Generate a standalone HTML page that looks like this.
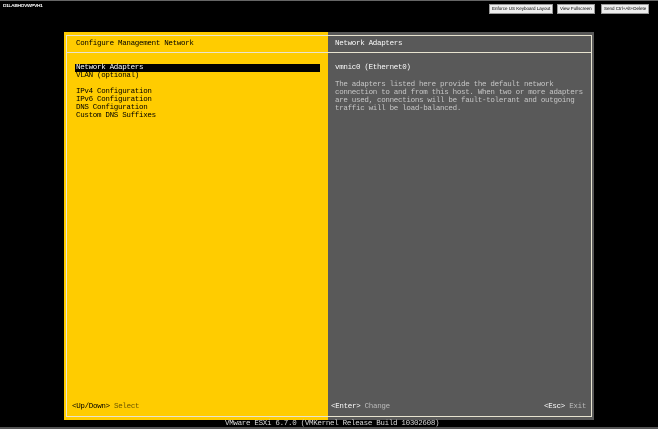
<!DOCTYPE html>
<html><head><style>
body{margin:0;width:658px;height:429px;background:#000;position:relative;overflow:hidden;font-family:"Liberation Mono",monospace;}
.t{position:absolute;font-size:7.5px;line-height:8px;white-space:pre;letter-spacing:-0.3px}
.btn{position:absolute;top:4px;height:8px;background:#eee;border:1px solid #999;font:4.5px "Liberation Sans",sans-serif;line-height:8px;color:#000;padding:0 2px}
</style></head><body>
<div style="position:absolute;left:0;top:0;width:658px;height:1px;background:#666"></div>
<div style="position:absolute;left:0;top:427px;width:658px;height:2px;background:#555"></div>
<div class="t" style="left:3px;top:4px;font:bold 4.8px 'Liberation Sans',sans-serif;color:#fff">D1LABHOVWPVH1</div>
<div class="btn" style="left:489px">Enforce US Keyboard Layout</div>
<div class="btn" style="left:557px">View Fullscreen</div>
<div class="btn" style="left:601px">Send Ctrl+Alt+Delete</div>
<div style="position:absolute;left:64px;top:32px;width:264px;height:388px;background:#ffcc00"></div>
<div style="position:absolute;left:328px;top:32px;width:266px;height:388px;background:#595959"></div>
<div style="position:absolute;left:66px;top:35px;width:524px;height:380px;border:1px solid #e8e4d0"></div>
<div style="position:absolute;left:67px;top:52px;width:524px;height:1px;background:#e8e4d0"></div>
<div class="t" style="left:76px;top:40px;color:#000">Configure Management Network</div>
<div class="t" style="left:335px;top:40px;color:#fff">Network Adapters</div>
<div style="position:absolute;left:75px;top:64px;width:245px;height:8px;background:#000"></div>
<div class="t" style="left:76px;top:64px;color:#fff">Network Adapters</div>
<div class="t" style="left:76px;top:72px;color:#000">VLAN (optional)

IPv4 Configuration
IPv6 Configuration
DNS Configuration
Custom DNS Suffixes</div>
<div class="t" style="left:335px;top:64px;color:#fff">vmnic0 (Ethernet0)</div>
<div class="t" style="left:335px;top:81px;color:#c8c8c8">The adapters listed here provide the default network
connection to and from this host. When two or more adapters
are used, connections will be fault-tolerant and outgoing
traffic will be load-balanced.</div>
<div class="t" style="left:72px;top:403px;color:#000">&lt;Up/Down&gt; <span style="color:#6a5500">Select</span></div>
<div class="t" style="left:331px;top:403px;color:#fff">&lt;Enter&gt; <span style="color:#bbb">Change</span></div>
<div class="t" style="left:544px;top:403px;color:#fff">&lt;Esc&gt; <span style="color:#bbb">Exit</span></div>
<div class="t" style="left:225px;top:420px;color:#ddd">VMware ESXi 6.7.0 (VMKernel Release Build 10302608)</div>
</body></html>
